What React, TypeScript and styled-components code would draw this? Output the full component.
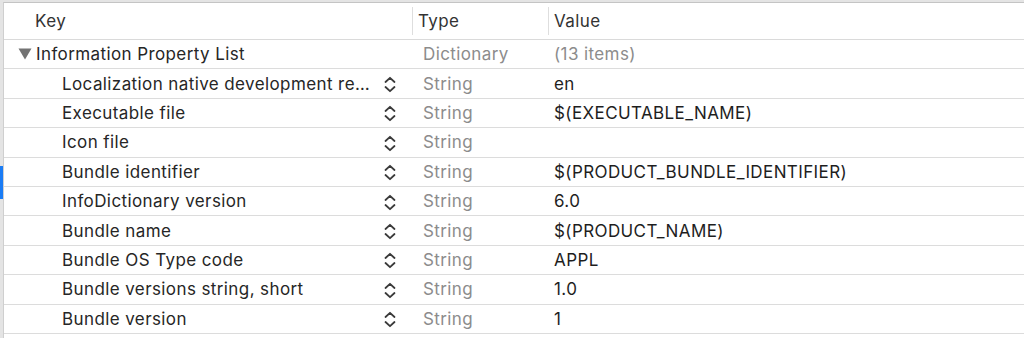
import React from "react";
import styled, { createGlobalStyle } from "styled-components";

const Global = createGlobalStyle`
  html, body { margin: 0; padding: 0; background: #ffffff; }
  body { font-family: Inter, "Liberation Sans", sans-serif; -webkit-font-smoothing: antialiased; }
`;

const Frame = styled.div`
  display: flex;
  width: 1024px;
  height: 338px;
  overflow: hidden;
  background: #e4e4e4;
`;

const Gutter = styled.div`
  width: 3px;
  flex: none;
  display: flex;
  flex-direction: column;
`;

const Marker = styled.div`
  margin-top: 166px;
  height: 33px;
  background: #1a7cf5;
`;

const Sheet = styled.div`
  flex: 1;
  margin-top: 2px;
  background: #ffffff;
  border-top: 1px solid #c4c4c4;
  border-left: 1px solid #cfcfcf;
  display: flex;
  flex-direction: column;
`;

const Grid = styled.div`
  display: grid;
  grid-template-columns: 408px 136px 1fr;
`;

const HeaderRow = styled(Grid)`
  height: 36px;
  border-bottom: 1px solid #dadada;
  align-items: center;
`;

const HeaderCell = styled.div<{ $sep?: boolean; $pad: number }>`
  height: 28px;
  display: flex;
  align-items: center;
  padding-left: ${(p) => p.$pad}px;
  border-left: ${(p) => (p.$sep ? "1px solid #dedede" : "none")};
  font-size: 17px;
  letter-spacing: 0.4px;
  color: #333333;
`;

const Row = styled(Grid)`
  height: 28.4px;
  border-bottom: 1px solid #dcdcdc;
  align-items: center;
  font-size: 17px;
  letter-spacing: 0.4px;
`;

const KeyCell = styled.div<{ $indent: number }>`
  display: flex;
  align-items: center;
  padding-left: ${(p) => p.$indent}px;
  padding-right: 15px;
  color: #262626;
  white-space: nowrap;
  overflow: hidden;
`;

const KeyText = styled.span`
  flex: 1;
  overflow: hidden;
`;

const TypeCell = styled.div<{ $pad: number }>`
  padding-left: ${(p) => p.$pad}px;
  color: #8c8c8c;
`;

const ValueCell = styled.div<{ $muted?: boolean }>`
  padding-left: 6px;
  color: ${(p) => (p.$muted ? "#8c8c8c" : "#1e1e1e")};
`;

const Disclosure = styled.svg`
  width: 14px;
  height: 12px;
  margin-right: 4px;
  flex: none;
`;

const Stepper = styled.svg`
  width: 14px;
  height: 18px;
  flex: none;
  margin-top: 3px;
`;

const StepperIcon = () => (
  <Stepper viewBox="0 0 14 18">
    <path d="M2.5 6 L7 1.8 L11.5 6" fill="none" stroke="#3a3a3a" strokeWidth="1.8" strokeLinecap="round" strokeLinejoin="round" />
    <path d="M2.5 11 L7 15.2 L11.5 11" fill="none" stroke="#3a3a3a" strokeWidth="1.8" strokeLinecap="round" strokeLinejoin="round" />
  </Stepper>
);

const rows: [string, string, string][] = [
  ["Localization native development re…", "String", "en"],
  ["Executable file", "String", "$(EXECUTABLE_NAME)"],
  ["Icon file", "String", ""],
  ["Bundle identifier", "String", "$(PRODUCT_BUNDLE_IDENTIFIER)"],
  ["InfoDictionary version", "String", "6.0"],
  ["Bundle name", "String", "$(PRODUCT_NAME)"],
  ["Bundle OS Type code", "String", "APPL"],
  ["Bundle versions string, short", "String", "1.0"],
  ["Bundle version", "String", "1"],
];

export default function App() {
  return (
    <>
      <Global />
      <Frame>
        <Gutter>
          <Marker />
        </Gutter>
        <Sheet>
          <HeaderRow>
            <HeaderCell $pad={31}>Key</HeaderCell>
            <HeaderCell $sep $pad={5}>Type</HeaderCell>
            <HeaderCell $sep $pad={5}>Value</HeaderCell>
          </HeaderRow>
          <Row>
            <KeyCell $indent={14}>
              <Disclosure viewBox="0 0 14 12">
                <path d="M0.5 0.5 L13.5 0.5 L7 11.5 Z" fill="#737373" />
              </Disclosure>
              <KeyText>Information Property List</KeyText>
            </KeyCell>
            <TypeCell $pad={11}>Dictionary</TypeCell>
            <ValueCell $muted>(13 items)</ValueCell>
          </Row>
          {rows.map(([k, t, v]) => (
            <Row key={k}>
              <KeyCell $indent={58}>
                <KeyText>{k}</KeyText>
                <StepperIcon />
              </KeyCell>
              <TypeCell $pad={11}>{t}</TypeCell>
              <ValueCell>{v}</ValueCell>
            </Row>
          ))}
        </Sheet>
      </Frame>
    </>
  );
}
